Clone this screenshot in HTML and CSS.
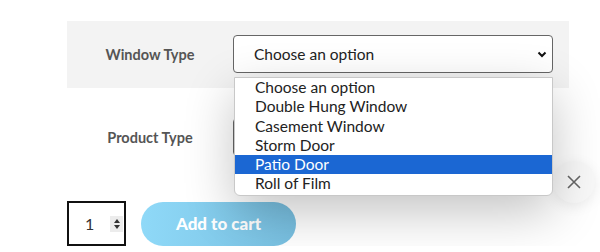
FILE: index.html
```html
<!DOCTYPE html>
<html lang="en">
<head>
    <meta charset="UTF-8">
    <meta name="viewport" content="width=device-width, initial-scale=1.0">
    <title>Product options</title>
    <link rel="stylesheet" href="styles.css">
</head>
<body>
    <div class="product">
        <!-- variation table -->
        <div class="variations">
            <div class="row shaded">
                <div class="label">Window Type</div>
                <div class="value">
                    <div class="select">
                        <span>Choose an option</span>
                        <svg class="chev" width="10" height="7" viewBox="0 0 10 7"><path d="M1.5 1.5 L5 5 L8.5 1.5" fill="none" stroke="#111" stroke-width="2"/></svg>
                    </div>
                    <!-- open list -->
                    <ul class="options">
                        <li>Choose an option</li>
                        <li>Double Hung Window</li>
                        <li>Casement Window</li>
                        <li>Storm Door</li>
                        <li class="current">Patio Door</li>
                        <li>Roll of Film</li>
                    </ul>
                </div>
            </div>
            <div class="row tall">
                <div class="label">Product Type</div>
                <div class="value">
                    <!-- hidden under the open list -->
                    <div class="select"></div>
                </div>
            </div>
        </div>
        <div class="cart">
            <div class="qty">
                <span>1</span>
                <div class="spin">
                    <svg width="8" height="12" viewBox="0 0 8 12"><path d="M4 1 L7 5 L1 5 Z M4 11 L7 7 L1 7 Z" fill="#333"/></svg>
                </div>
            </div>
            <button class="add">Add to cart</button>
        </div>
        <div class="close">
            <svg width="14" height="14" viewBox="0 0 14 14"><path d="M1 1 L13 13 M13 1 L1 13" stroke="#666" stroke-width="1.6" fill="none"/></svg>
        </div>
    </div>
</body>
</html>
```
FILE: styles.css
```css
*{
    margin: 0;
    padding: 0;
    box-sizing: border-box;
}
body{
    font-family: Lato, "Liberation Sans", sans-serif;
    background: #fff;
    color: #222;
}
.product{
    position: relative;
    width: 502px;
    margin: 21px 0 0 67px;
}
.row{
    display: flex;
    align-items: center;
    padding: 14px 16px 15px 0;
}
.row.shaded{
    background-color: #f3f3f3;
}
.row.tall{
    padding: 30px 16px 30px 0;
}
.label{
    width: 166px;
    text-align: center;
    font-weight: bold;
    font-size: 14.5px;
    color: #555;
}
.value{
    position: relative;
    width: 320px;
}
.select{
    display: flex;
    align-items: center;
    justify-content: space-between;
    height: 38px;
    padding: 0 5px 0 20px;
    background: #fff;
    border: 1px solid #666;
    border-radius: 4px;
    font-size: 15.5px;
    color: #222;
}
.chev{
    margin-top: 1px;
}
.options{
    position: absolute;
    top: 42px;
    left: 1px;
    right: 0;
    list-style: none;
    background: #fff;
    border: 1px solid #c8c8c8;
    border-radius: 0 0 6px 6px;
    padding: 0 0 1px;
    box-shadow: 0 16px 50px rgba(0,0,0,.24);
    z-index: 10;
}
.options li{
    height: 19.3px;
    line-height: 18px;
    padding-left: 20px;
    font-size: 15.5px;
    color: #222;
}
.options li.current{
    background-color: #1b67d3;
    color: #fff;
}
.cart{
    display: flex;
    align-items: center;
    gap: 15px;
    margin-top: 15px;
}
.qty{
    display: flex;
    align-items: center;
    width: 59px;
    height: 45px;
    border: 2px solid #111;
    padding-left: 16px;
    font-size: 16px;
    color: #333;
}
.qty span{
    width: 25px;
}
.spin{
    width: 13px;
    height: 16px;
    background: #ececec;
    display: flex;
    align-items: center;
    justify-content: center;
}
.add{
    width: 155px;
    height: 44px;
    border: none;
    border-radius: 22px;
    background: linear-gradient(90deg, #8fd9f8, #78bfe0);
    color: #fff;
    font-family: Lato, "Liberation Sans", sans-serif;
    font-weight: 900;
    font-size: 17px;
}
.close{
    position: absolute;
    left: 486px;
    top: 140px;
    width: 42px;
    height: 42px;
    border-radius: 50%;
    background: #f8f8f8;
    box-shadow: 0 3px 14px rgba(0,0,0,.08);
    display: flex;
    align-items: center;
    justify-content: center;
}
```
